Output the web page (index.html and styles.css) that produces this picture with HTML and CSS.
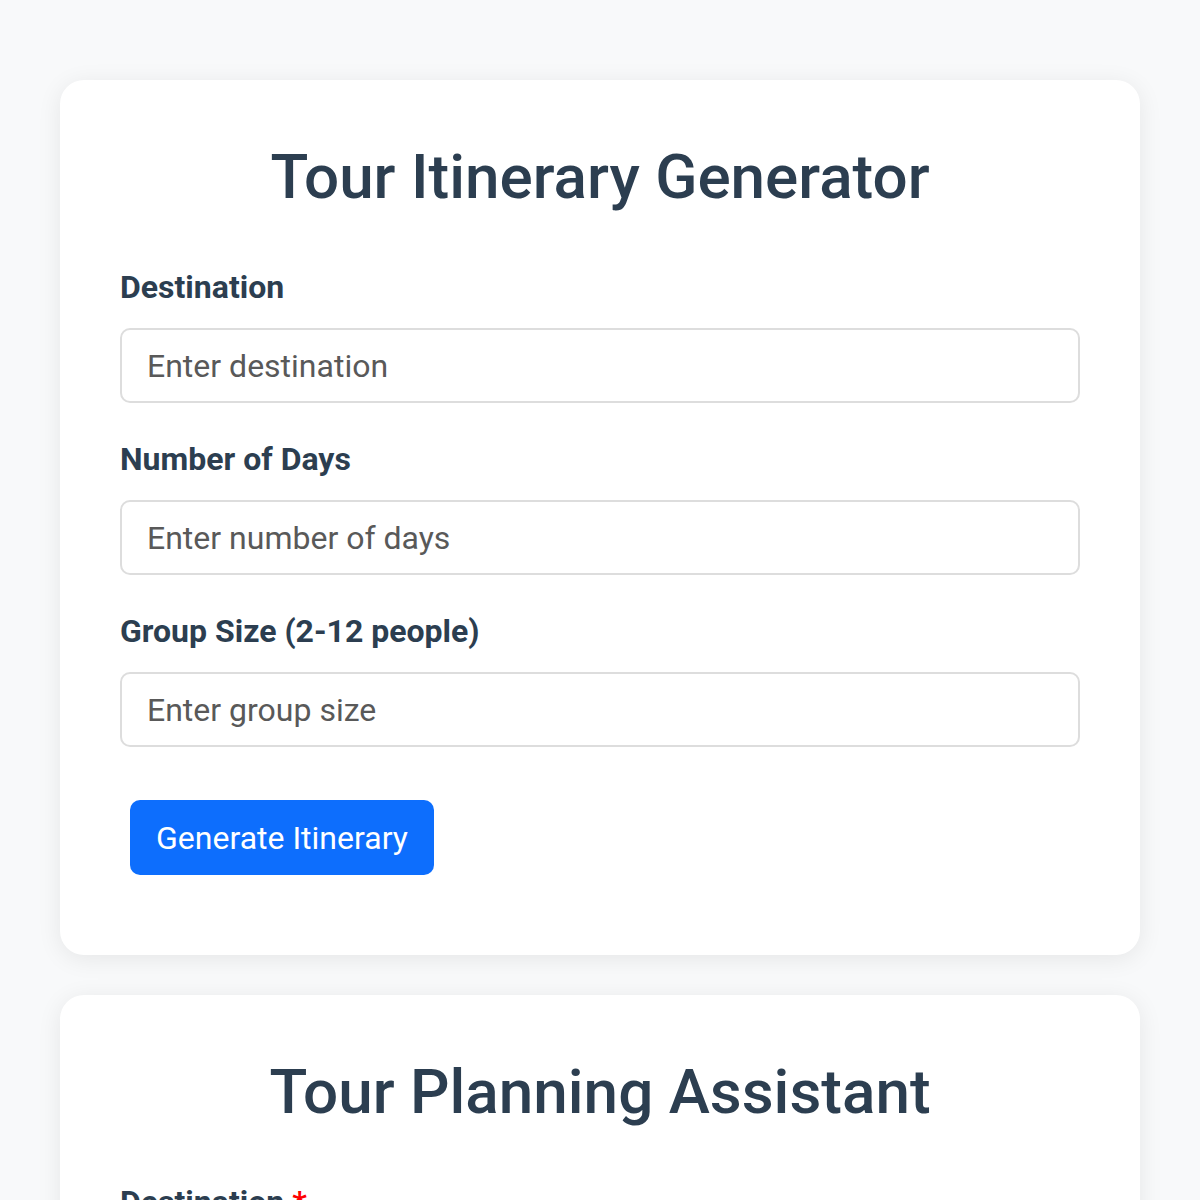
FILE: index.html
```html
<!DOCTYPE html>
<html lang="en">
<head>
  <meta charset="UTF-8" />
  <meta name="viewport" content="width=device-width, initial-scale=1.0" />
  <title>Tour Itinerary Generator</title>
  <link rel="stylesheet" href="styles.css">
</head>
<body>
  <div class="card">
    <h1>Tour Itinerary Generator</h1>

    <div class="field">
      <label for="destination">Destination</label>
      <input type="text" id="destination" placeholder="Enter destination">
    </div>

    <div class="field">
      <label for="days">Number of Days</label>
      <input type="number" id="days" placeholder="Enter number of days">
    </div>

    <div class="field">
      <label for="groupSize">Group Size (2-12 people)</label>
      <input type="number" id="groupSize" placeholder="Enter group size">
    </div>

    <button class="btn">Generate Itinerary</button>
  </div>

  <div class="card">
    <h1>Tour Planning Assistant</h1>

    <div class="field">
      <label for="planDestination">Destination <span class="required">*</span></label>
      <input type="text" id="planDestination" placeholder="Enter destination">
    </div>
  </div>
</body>
</html>
```

FILE: styles.css
```css
body {
  margin: 0;
  padding: 80px 60px;
  font-family: Roboto, 'Liberation Sans', sans-serif;
  background: #f8f9fa;
  color: #2c3e50;
}
.card {
  background: #fff;
  border-radius: 24px;
  padding: 60px 60px 80px;
  margin-bottom: 40px;
  box-shadow: 0 4px 24px rgba(0, 0, 0, 0.08);
}
.card h1 {
  margin: 0 0 55px;
  text-align: center;
  font-size: 62px;
  font-weight: 500;
  color: #2c3e50;
}
.field {
  display: flex;
  flex-direction: column;
  margin-bottom: 37px;
}
.field label {
  font-size: 32px;
  font-weight: 700;
  margin-bottom: 22px;
  color: #2c3e50;
}
.field input {
  box-sizing: border-box;
  height: 75px;
  padding: 0 25px;
  font-family: inherit;
  font-size: 32px;
  color: #333;
  border: 2px solid #ddd;
  border-radius: 10px;
  outline: none;
}
.field input::placeholder {
  color: #595959;
}
.field input[type=number]::-webkit-inner-spin-button {
  -webkit-appearance: none;
}
.required {
  color: red;
}
.btn {
  margin: 16px 0 0 10px;
  height: 75px;
  padding: 0 26px;
  font-family: inherit;
  font-size: 32px;
  color: #fff;
  background: #0d6efd;
  border: none;
  border-radius: 10px;
  cursor: pointer;
}
```
